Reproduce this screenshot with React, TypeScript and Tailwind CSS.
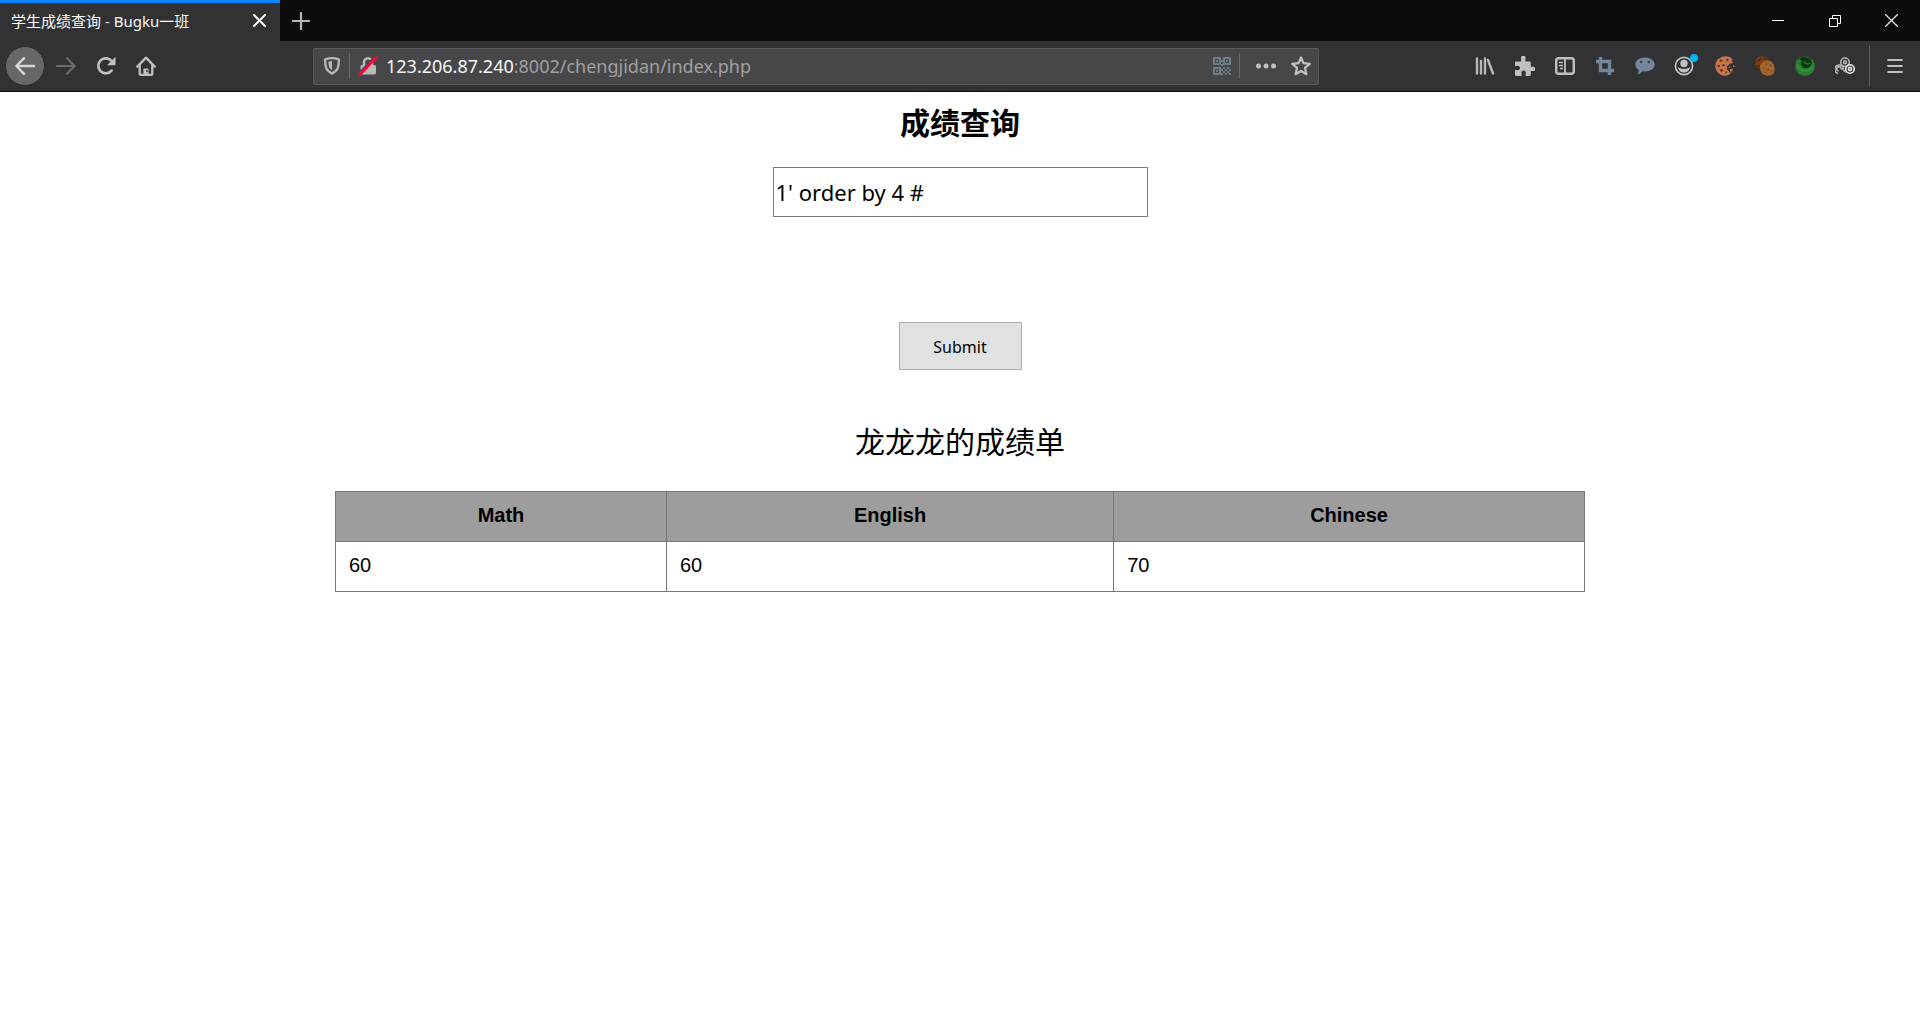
import type { ReactNode } from 'react';

const UI_FONT = "font-['Noto_Sans','Noto_Sans_CJK_SC',sans-serif]";

function IconButton({ label, className = 'w-10', children }: { label: string; className?: string; children: ReactNode }) {
    return (
        <button
            type="button"
            aria-label={label}
            className={`flex h-full shrink-0 items-center justify-center ${className}`}>
            {children}
        </button>
    );
}

function BackIcon() {
    return (
        <svg width="20" height="20" viewBox="0 0 20 20" fill="none" stroke="#d8d8d9" strokeWidth="2.4" strokeLinecap="round" strokeLinejoin="round">
            <path d="M19 10H2M9 2.2 1.4 10 9 17.8" />
        </svg>
    );
}

function ForwardIcon() {
    return (
        <svg width="20" height="20" viewBox="0 0 20 20" fill="none" stroke="#6b6b6d" strokeWidth="2.2" strokeLinecap="round" strokeLinejoin="round">
            <path d="M1 10h17M11 2.2 18.6 10 11 17.8" />
        </svg>
    );
}

function ReloadIcon() {
    return (
        <svg width="20" height="20" viewBox="0 0 20 20" fill="none" stroke="#c0c0c2" strokeWidth="2.6" strokeLinecap="round">
            <path d="M15.6 14.6A7.5 7.5 0 1 1 16 5.6" />
            <path d="M19.5.8v7.6a.8.8 0 0 1-.8.8H11z" fill="#c0c0c2" stroke="none" />
        </svg>
    );
}

function HomeIcon() {
    return (
        <svg width="20" height="20" viewBox="0 0 20 20" fill="none" stroke="#c0c0c2" strokeWidth="2.3" strokeLinecap="round" strokeLinejoin="round">
            <path d="M1.3 10.6 10 1.6l8.7 9" />
            <path d="M3.7 9.5v8.2c0 .7.4 1.1 1.1 1.1h10.4c.7 0 1.1-.4 1.1-1.1V9.5" />
            <path d="M7.4 18.6v-5.2c0-.6.3-.9.9-.9h3.4c.6 0 .9.3.9.9v5.2z" fill="#c0c0c2" stroke="none" />
            <circle cx="11" cy="15" r="1" fill="#323234" stroke="none" />
        </svg>
    );
}

function ShieldIcon() {
    return (
        <svg width="18" height="20" viewBox="0 0 18 20">
            <path d="M9 2.2c2.4 0 4.6.3 6.2.9.5.2.7.5.7 1 0 5.8-.5 10.4-6.9 13.5C2.6 14.5 2.1 9.900 2.1 4.100c0-.5.2-.8.7-1C4.400 2.500 6.600 2.200 9 2.200z" fill="none" stroke="#b8b8b9" strokeWidth="2.3" />
            <path d="M9 5.3v9c-2.900-1.800-3.500-4.500-3.600-8.600C6.500 5.400 7.700 5.300 9 5.300z" fill="#b8b8b9" />
        </svg>
    );
}

function InsecureLockIcon() {
    return (
        <svg width="20" height="20" viewBox="0 0 20 20">
            <path d="M6 10V6.2a4 4 0 0 1 8 0V10" fill="none" stroke="#b8b8b9" strokeWidth="2.6" />
            <rect x="2.500" y="9" width="15.500" height="9.500" rx="1.500" fill="#b8b8b9" />
            <path d="M.2 16.400 16 .2l1.500 1L2 18z" fill="#474749" />
            <path d="M2.200 18.200 17.900 1.500" stroke="#ff0039" strokeWidth="2.8" strokeLinecap="round" />
        </svg>
    );
}

function QrIcon() {
    return (
        <svg width="18" height="18" viewBox="0 0 18 18" fill="#6d7c8b">
            <path fillRule="evenodd" d="M0 0h8v8H0zM2 2v4h4V2zM10 0h8v8h-8zM12 2v4h4V2zM0 10h8v8H0zM2 12v4h4v-4z" />
            <path d="M3 3h2v2H3zM13 3h2v2h-2zM3 13h2v2H3zM8 3h2v2H8zM8 7h2v2H8zM10 10h2v2h-2zM14 10h2v2h-2zM12 12h2v2h-2zM16 12h2v2h-2zM10 14h2v2h-2zM14 14h2v2h-2zM12 16h2v2h-2zM16 16h2v2h-2zM8 12h2v2H8zM8 16h2v2H8z" />
        </svg>
    );
}

function DotsIcon() {
    return (
        <svg width="20" height="6" viewBox="0 0 20 6" fill="#c0c0c2">
            <circle cx="2.5" cy="3" r="2.5" />
            <circle cx="10" cy="3" r="2.5" />
            <circle cx="17.5" cy="3" r="2.5" />
        </svg>
    );
}

function StarIcon() {
    return (
        <svg width="20" height="20" viewBox="0 0 20 20" fill="none" stroke="#c0c0c2" strokeWidth="2.2" strokeLinejoin="round">
            <path d="m10 1.500 2.500 5.700 6.200.6-4.700 4.100 1.400 6.300L10 15l-5.400 3.200L6 11.900 1.300 7.800l6.200-.6z" />
        </svg>
    );
}

function LibraryIcon() {
    return (
        <svg width="20" height="18" viewBox="0 0 20 18" fill="none" stroke="#b8b8ba" strokeWidth="2.4" strokeLinecap="round">
            <path d="M2 1.500v15M6 4v12.500M10 1.500v15M13 3l5 13.500" />
        </svg>
    );
}

function PuzzleIcon() {
    return (
        <svg width="20" height="20" viewBox="0 0 20 20" fill="#c0c0c2">
            <path d="M6.200 5.500V2.800a2.300 2.300 0 1 1 4.200 0v2.700h4.200c.7 0 1.200.5 1.200 1.200v4.100h1.800a2.200 2.200 0 1 1 0 4.200h-1.800v3.800c0 .7-.5 1.200-1.200 1.200h-4v-2.400a2.200 2.200 0 1 0-4 0V20H1.200C.5 20 0 19.500 0 18.800V14h1.900a2.200 2.200 0 1 0 0-4H0V6.700c0-.7.5-1.200 1.200-1.200z" />
        </svg>
    );
}

function SidebarIcon() {
    return (
        <svg width="20" height="18" viewBox="0 0 20 18" fill="none" stroke="#c0c0c2">
            <rect x="1.2" y="1.2" width="17.6" height="15.6" rx="2.5" strokeWidth="2.4" />
            <path d="M10 2v14" strokeWidth="1.8" />
            <path d="M4 5.500h4M4 8.500h4M5 11.500h3" strokeWidth="1.5" />
        </svg>
    );
}

function CropIcon() {
    return (
        <svg width="18" height="18" viewBox="0 0 18 18" fill="none" stroke="#76869a" strokeWidth="3.4">
            <path d="M4.500 0v13.500H18M0 4.500h13.500V18" />
        </svg>
    );
}

function BubbleIcon() {
    return (
        <svg width="20" height="18" viewBox="0 0 20 18">
            <path d="M10 .5c5.500 0 9.700 3 9.700 7s-4.200 7-9.700 7c-1 0-1.900-.1-2.700-.3-1.300 1.600-2.900 2.700-5 3 .9-1.200 1.400-2.700 1.300-4.300C1.500 11.600.3 9.700.3 7.500c0-4 4.200-7 9.700-7z" fill="#76869a" />
            <circle cx="6.2" cy="5" r="1.3" fill="#3a4048" />
            <circle cx="13.8" cy="5" r="1.3" fill="#3a4048" />
        </svg>
    );
}

function AccountIcon() {
    return (
        <svg width="28" height="24" viewBox="0 0 28 24">
            <circle cx="13" cy="12" r="8.6" fill="none" stroke="#c0c0c2" strokeWidth="1.7" />
            <circle cx="13" cy="9.5" r="3.7" fill="#c0c0c2" />
            <path d="M7 13.500c2 0 2.700 1.500 6 1.500s4-1.500 6-1.500c-.5 3-3 5-6 5s-5.500-2-6-5z" fill="#c0c0c2" />
            <circle cx="23" cy="4" r="4" fill="#00b3f4" />
        </svg>
    );
}

function CookieIcon() {
    return (
        <svg width="20" height="20" viewBox="0 0 20 20">
            <path d="M10.500.3C13.600.3 16 1.500 17.600 3.500l-1.200 1.700 2 .8-1.700 1.600c-1.500-.3-2.800.3-3 1.400-1.600.4-2 1.500-1.500 2.700-.7 1.400.1 2.500 1.300 2.700.4 1.700 1.500 2.300 3 2.200C15 18.600 13 19.700 10 19.700 4.500 19.700.3 15.400.3 10S4.700.3 10.500.3z" fill="#c4754b" />
            <g fill="#6b3826">
                <circle cx="6" cy="4.7" r="1.4" />
                <circle cx="12.4" cy="4" r="1.3" />
                <circle cx="3.7" cy="10" r="1.3" />
                <circle cx="8.6" cy="9.2" r="1.3" />
                <circle cx="6.5" cy="14.5" r="1.4" />
                <circle cx="11.2" cy="16.3" r="1" />
            </g>
            <path d="M15 13h2.500v2.500H15zM18 9.500h1.500V11H18zM13.800 10.500h1.400v1.400h-1.400z" fill="#c4754b" />
        </svg>
    );
}

function CookiesIcon() {
    return (
        <svg width="20" height="20" viewBox="0 0 20 20">
            <path d="M.3 7C.3 3 3 .3 7 .3c3.600 0 6.500 2 7 5L7 13C3 13 .3 10.500.3 7z" fill="#7b3c17" />
            <path d="M2.500 5.500 6 2.500M9 2l3 2M2 9l3 2" stroke="#592809" strokeWidth="1.5" />
            <path d="M12.500 4.600c4 0 7 3.200 7 7.700 0 2 .2 3.300-.8 5-1.600 2.200-4 2.500-6.700 2.300-4-.3-7-3.500-7-7.500s3.300-7.500 7.500-7.500z" fill="#a0662f" />
            <g fill="#6b421c">
                <circle cx="11" cy="8" r="0.8" />
                <circle cx="15.5" cy="9.5" r="0.9" />
                <circle cx="8.5" cy="12" r="0.8" />
                <circle cx="13" cy="13.5" r="0.9" />
                <circle cx="16.5" cy="15" r="0.8" />
                <circle cx="10.5" cy="16.5" r="0.8" />
            </g>
        </svg>
    );
}

function GreenSwirlIcon() {
    return (
        <svg width="20" height="20" viewBox="0 0 20 20">
            <path d="M1 3.500 5 1l7-.5 6 3.500 1.800 4.500c.4 3-.4 6.500-3 8.800-2.500 2-6.300 3-9.800 1.900C3 18 .4 14.500.2 10.500L.8 7z" fill="#2c7d31" />
            <path d="M4 2.500C8 0 14 1 16 4c1.500 2.500 1 5.500-1 7-2.500 1.800-6.500 1.500-8-.8C5.700 8 5.500 6.500 7 5.500z" fill="#0c3a10" />
            <path d="M9 5c.5 3 3 3.500 6 2" fill="none" stroke="#2c7d31" strokeWidth="1.2" />
            <path d="M2.500 9c1 4 4.500 6 8 5.800 3.500-.3 6-2.300 6.800-5.300" fill="none" stroke="#3f9a40" strokeWidth="1.2" />
            <path d="m1 1.500 3 .5L2 5z" fill="#174d1b" />
        </svg>
    );
}

function CloudSwirlIcon() {
    return (
        <svg width="20" height="18" viewBox="0 0 20 18" fill="none" stroke="#b4b4b4" strokeWidth="1.6">
            <circle cx="10" cy="5.2" r="4.2" />
            <circle cx="10" cy="5.2" r="1.4" />
            <circle cx="15" cy="12" r="4.3" stroke="#e8e8e8" />
            <circle cx="15" cy="12" r="1.6" stroke="#e8e8e8" />
            <path d="M3 16.500A4.300 4.300 0 1 1 8.500 12M3.500 14a2.200 2.200 0 1 1 2.500-1.500M7 11.500l4 4" />
        </svg>
    );
}

function MenuIcon() {
    return (
        <svg width="16" height="16" viewBox="0 0 16 16" stroke="#c0c0c2" strokeWidth="2.2" strokeLinecap="round">
            <path d="M1.200 2h13.600M1.200 8h13.600M1.200 14h13.600" />
        </svg>
    );
}

const extensions = [
    { label: 'Library', icon: <LibraryIcon /> },
    { label: 'Add-ons', icon: <PuzzleIcon /> },
    { label: 'Sidebars', icon: <SidebarIcon /> },
    { label: 'Screenshot', icon: <CropIcon /> },
    { label: 'Messages', icon: <BubbleIcon /> },
    { label: 'Account', icon: <AccountIcon /> },
    { label: 'Cookie editor', icon: <CookieIcon /> },
    { label: 'Cookie manager', icon: <CookiesIcon /> },
    { label: 'Proxy', icon: <GreenSwirlIcon /> },
    { label: 'Cloud', icon: <CloudSwirlIcon /> },
];

function TitleBar() {
    return (
        <div className="flex h-[41px] bg-[#0c0c0d]">
            <div className="flex w-[280px] items-center justify-between border-t-[3px] border-[#0a84ff] bg-[#323234] pr-[14px] pb-[3px] pl-[11px]">
                <span className="text-[15px] leading-5 text-[#f9f9fa]">学生成绩查询 - Bugku一班</span>
                <button type="button" aria-label="Close tab">
                    <svg width="13" height="13" viewBox="0 0 13 13" stroke="#f9f9fa" strokeWidth="2" strokeLinecap="round">
                        <path d="m1 1 11 11M12 1 1 12" />
                    </svg>
                </button>
            </div>
            <IconButton label="New tab" className="w-[42px]">
                <svg width="18" height="18" viewBox="0 0 18 18" stroke="#b8b8b9" strokeWidth="2.2" strokeLinecap="round">
                    <path d="M9 1v16M1 9h16" />
                </svg>
            </IconButton>
            <div className="ml-auto flex">
                <IconButton label="Minimize" className="w-[57px]">
                    <svg width="12" height="12" viewBox="0 0 12 12" fill="#fff">
                        <path d="M0 5h12v1H0z" />
                    </svg>
                </IconButton>
                <IconButton label="Restore" className="w-[57px]">
                    <svg width="12" height="12" viewBox="0 0 12 12" fill="none" stroke="#fff">
                        <path d="M.5 3.500h8v8h-8zM3.500 3.500v-3h8v8h-3" />
                    </svg>
                </IconButton>
                <IconButton label="Close" className="w-[57px]">
                    <svg width="13" height="13" viewBox="0 0 13 13" stroke="#e8e8e8" strokeWidth="1.3">
                        <path d="m0 0 13 13M13 0 0 13" />
                    </svg>
                </IconButton>
            </div>
        </div>
    );
}

function AddressBar() {
    return (
        <div className="flex h-[37px] min-w-0 flex-1 items-center rounded-[2px] border border-[#5a5a5c] bg-[#474749]">
            <IconButton label="Tracking protection" className="w-[35px]">
                <ShieldIcon />
            </IconButton>
            <span className="h-[26px] w-px bg-[#68686a]" />
            <IconButton label="Site information" className="w-9">
                <InsecureLockIcon />
            </IconButton>
            <div role="textbox" aria-label="Address" className="min-w-0 flex-1 truncate text-[18px] leading-6 text-[#a0a0a1]">
                <span className="text-[#f9f9fa]">123.206.87.240</span>:8002/chengjidan/index.php
            </div>
            <IconButton label="QR code" className="w-[34px]">
                <QrIcon />
            </IconButton>
            <span className="mr-2 h-[26px] w-px bg-[#68686a]" />
            <IconButton label="Page actions" className="w-9">
                <DotsIcon />
            </IconButton>
            <IconButton label="Bookmark" className="w-[34px]">
                <StarIcon />
            </IconButton>
        </div>
    );
}

function Toolbar() {
    return (
        <div className="flex h-[51px] items-center border-b border-[#0c0c0d] bg-[#323234] pl-[5px]">
            <button
                type="button"
                aria-label="Back"
                className="mr-px flex size-10 shrink-0 items-center justify-center rounded-full border border-[#2a2a2c] bg-[#676768]">
                <BackIcon />
            </button>
            <IconButton label="Forward">
                <ForwardIcon />
            </IconButton>
            <IconButton label="Reload">
                <ReloadIcon />
            </IconButton>
            <IconButton label="Home">
                <HomeIcon />
            </IconButton>
            <div className="mr-[146px] ml-[147px] flex min-w-0 flex-1">
                <AddressBar />
            </div>
            {extensions.map((ext) => (
                <IconButton key={ext.label} label={ext.label}>
                    {ext.icon}
                </IconButton>
            ))}
            <span className="ml-1 h-[42px] w-px bg-[#5a5a5c]" />
            <IconButton label="Menu" className="w-[50px]">
                <MenuIcon />
            </IconButton>
        </div>
    );
}

function ScoreTable() {
    return (
        <table className="mt-[29px] w-full max-w-[1250px] border-collapse font-['Liberation_Sans',Arial,sans-serif] text-xl text-black">
            <colgroup>
                <col className="w-[26.5%]" />
                <col className="w-[35.8%]" />
                <col />
            </colgroup>
            <thead>
                <tr className="h-[50px] bg-[#9d9d9d]">
                    <th className="border border-[#777778] px-[13px] pb-[3px] font-bold">Math</th>
                    <th className="border border-[#777778] px-[13px] pb-[3px] font-bold">English</th>
                    <th className="border border-[#777778] px-[13px] pb-[3px] font-bold">Chinese</th>
                </tr>
            </thead>
            <tbody>
                <tr className="h-[50px]">
                    <td className="border border-[#777778] px-[13px] pb-[3px]">60</td>
                    <td className="border border-[#777778] px-[13px] pb-[3px]">60</td>
                    <td className="border border-[#777778] px-[13px] pb-[3px]">70</td>
                </tr>
            </tbody>
        </table>
    );
}

export default function App() {
    return (
        <div className={`min-h-screen bg-white ${UI_FONT}`}>
            <header>
                <TitleBar />
                <Toolbar />
            </header>
            <main className="flex flex-col items-center pt-[11px] text-black">
                <form className="flex flex-col items-center" onSubmit={(e) => e.preventDefault()}>
                    <h1 className="text-[30px] leading-10 font-bold">
                        <label htmlFor="student-id">成绩查询</label>
                    </h1>
                    <input
                        id="student-id"
                        type="text"
                        defaultValue="1' order by 4 #"
                        className="mt-6 h-[50px] w-[375px] border border-[#7a7a7a] bg-white px-[2px] text-[22px]"
                    />
                    <button
                        type="submit"
                        className="mt-[105px] h-12 w-[123px] border border-[#adadad] bg-[#e1e1e1] pt-[2px] text-[16px]">
                        Submit
                    </button>
                </form>
                <p className="mt-[52px] text-[30px] leading-10">龙龙龙的成绩单</p>
                <ScoreTable />
            </main>
        </div>
    );
}
